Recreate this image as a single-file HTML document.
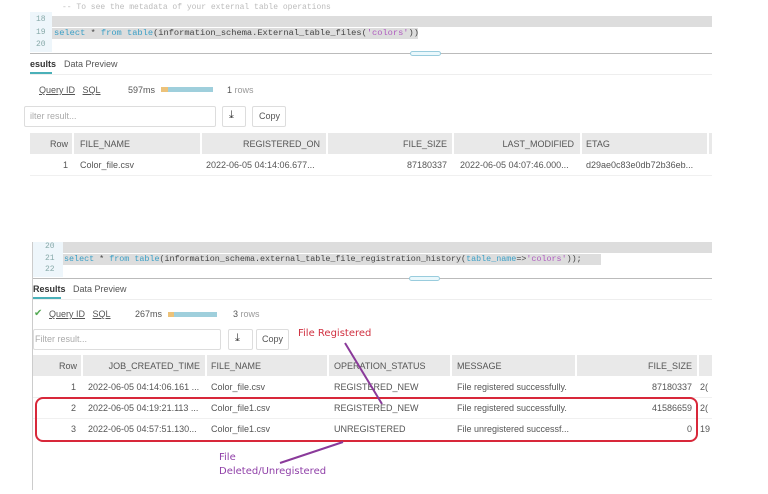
<!DOCTYPE html>
<html><head><meta charset="utf-8"><style>
*{margin:0;padding:0;box-sizing:border-box}
body{width:768px;height:494px;background:#fff;position:relative;overflow:hidden;font-family:"Liberation Sans",sans-serif;font-size:9px;color:#555}
.a{position:absolute;white-space:nowrap}
.r{position:absolute;white-space:nowrap;text-align:right}
.mono{font-family:"Liberation Mono",monospace;font-size:8.7px;color:#444}
.ln{font-family:"Liberation Mono",monospace;font-size:8px;color:#8aa}
.kw{color:#3a9fc6}.st{color:#b05cc0}
.hd{background:#e9e9e9}
.sep{position:absolute;width:2px;background:#fff}
.btn{position:absolute;border:1px solid #ddd;border-radius:2px;background:#fff}
.u{text-decoration:underline;color:#555}
</style></head><body>

<!-- TOP PANEL -->
<div class="a" style="left:30px;top:12px;width:22px;height:40px;background:#eef6fb"></div>
<div class="a mono" style="left:62px;top:3px;color:#bbb;font-size:8px">-- To see the metadata of your external table operations</div>
<div class="a" style="left:52px;top:16px;width:660px;height:11px;background:#ddd"></div>
<div class="a" style="left:52px;top:28px;width:366px;height:11px;background:#ddd"></div>
<div class="a ln" style="left:36px;top:15px">18</div>
<div class="a ln" style="left:36px;top:28px">19</div>
<div class="a ln" style="left:36px;top:40px">20</div>
<div class="a mono" style="left:54px;top:28px"><span class="kw">select</span> * <span class="kw">from table</span>(information_schema.External_table_files(<span class="st">'colors'</span>))</div>
<div class="a" style="left:30px;top:53px;width:682px;height:1px;background:#bbb"></div>
<div class="a" style="left:410px;top:51px;width:31px;height:5px;border:1px solid #9cd;border-radius:3px;background:#eaf8fc"></div>
<div class="a" style="left:30px;top:59px;font-size:9px;color:#333"><b>esults</b></div>
<div class="a" style="left:64px;top:59px;color:#555">Data Preview</div>
<div class="a" style="left:30px;top:72px;width:22px;height:2px;background:#4ab0b8"></div>
<div class="a" style="left:30px;top:74px;width:682px;height:1px;background:#eee"></div>
<div class="a" style="left:39px;top:85px"><span class="u">Query ID</span>&nbsp;&nbsp;&nbsp;<span class="u">SQL</span></div>
<div class="a" style="left:128px;top:85px">597ms</div>
<div class="a" style="left:161px;top:87px;width:52px;height:5px;background:#9fcfdc"></div>
<div class="a" style="left:161px;top:87px;width:7px;height:5px;background:#ecc27a"></div>
<div class="a" style="left:227px;top:85px">1 <span style="color:#999">rows</span></div>
<div class="btn" style="left:24px;top:106px;width:192px;height:21px"></div>
<div class="a" style="left:30px;top:111px;color:#aaa">ilter result...</div>
<div class="btn" style="left:222px;top:106px;width:24px;height:21px"></div>
<div class="a" style="left:229px;top:109px;font-size:11px;color:#333">⤓</div>
<div class="btn" style="left:252px;top:106px;width:34px;height:21px"></div>
<div class="a" style="left:259px;top:111px">Copy</div>
<div class="a hd" style="left:30px;top:133px;width:682px;height:21px"></div>
<div class="sep" style="left:72px;top:133px;height:21px"></div>
<div class="sep" style="left:200px;top:133px;height:21px"></div>
<div class="sep" style="left:326px;top:133px;height:21px"></div>
<div class="sep" style="left:452px;top:133px;height:21px"></div>
<div class="sep" style="left:580px;top:133px;height:21px"></div>
<div class="sep" style="left:707px;top:133px;height:21px"></div>
<div class="r" style="right:700px;top:139px">Row</div>
<div class="a" style="left:80px;top:139px">FILE_NAME</div>
<div class="r" style="right:448px;top:139px">REGISTERED_ON</div>
<div class="r" style="right:321px;top:139px">FILE_SIZE</div>
<div class="r" style="right:194px;top:139px">LAST_MODIFIED</div>
<div class="a" style="left:586px;top:139px">ETAG</div>
<div class="r" style="right:700px;top:160px">1</div>
<div class="a" style="left:80px;top:160px">Color_file.csv</div>
<div class="a" style="left:206px;top:160px">2022-06-05 04:14:06.677...</div>
<div class="r" style="right:321px;top:160px">87180337</div>
<div class="a" style="left:460px;top:160px">2022-06-05 04:07:46.000...</div>
<div class="a" style="left:586px;top:160px">d29ae0c83e0db72b36eb...</div>
<div class="a" style="left:30px;top:175px;width:682px;height:1px;background:#f0f0f0"></div>

<!-- BOTTOM PANEL -->
<div class="a" style="left:32px;top:242px;width:1px;height:248px;background:#ccc"></div>
<div class="a" style="left:33px;top:242px;width:30px;height:35px;background:#eef6fb"></div>
<div class="a" style="left:63px;top:242px;width:649px;height:11px;background:#ddd"></div>
<div class="a" style="left:63px;top:254px;width:538px;height:11px;background:#ddd"></div>
<div class="a ln" style="left:45px;top:242px">20</div>
<div class="a ln" style="left:45px;top:254px">21</div>
<div class="a ln" style="left:45px;top:265px">22</div>
<div class="a mono" style="left:64px;top:254px;font-size:8.4px"><span class="kw">select</span> * <span class="kw">from table</span>(information_schema.external_table_file_registration_history(<span class="kw">table_name</span>=&gt;<span class="st">'colors'</span>));</div>
<div class="a" style="left:33px;top:278px;width:679px;height:1px;background:#bbb"></div>
<div class="a" style="left:409px;top:276px;width:31px;height:5px;border:1px solid #9cd;border-radius:3px;background:#eaf8fc"></div>
<div class="a" style="left:33px;top:284px;color:#333"><b>Results</b></div>
<div class="a" style="left:73px;top:284px">Data Preview</div>
<div class="a" style="left:33px;top:297px;width:28px;height:2px;background:#4ab0b8"></div>
<div class="a" style="left:33px;top:299px;width:679px;height:1px;background:#eee"></div>
<div class="a" style="left:34px;top:308px;color:#5a5;font-size:10px">✔</div>
<div class="a" style="left:49px;top:309px"><span class="u">Query ID</span>&nbsp;&nbsp;&nbsp;<span class="u">SQL</span></div>
<div class="a" style="left:135px;top:309px">267ms</div>
<div class="a" style="left:168px;top:312px;width:49px;height:5px;background:#9fcfdc"></div>
<div class="a" style="left:168px;top:312px;width:6px;height:5px;background:#ecc27a"></div>
<div class="a" style="left:233px;top:309px">3 <span style="color:#999">rows</span></div>
<div class="btn" style="left:33px;top:329px;width:188px;height:21px"></div>
<div class="a" style="left:35px;top:334px;color:#aaa">Filter result...</div>
<div class="btn" style="left:228px;top:329px;width:25px;height:21px"></div>
<div class="a" style="left:235px;top:332px;font-size:11px;color:#333">⤓</div>
<div class="btn" style="left:256px;top:329px;width:33px;height:21px"></div>
<div class="a" style="left:262px;top:334px">Copy</div>
<div class="a" style="left:298px;top:328px;color:#d03040;font-size:10px;font-family:'DejaVu Sans',sans-serif">File Registered</div>
<div class="a hd" style="left:33px;top:355px;width:679px;height:21px"></div>
<div class="sep" style="left:81px;top:355px;height:21px"></div>
<div class="sep" style="left:205px;top:355px;height:21px"></div>
<div class="sep" style="left:327px;top:355px;height:21px"></div>
<div class="sep" style="left:450px;top:355px;height:21px"></div>
<div class="sep" style="left:575px;top:355px;height:21px"></div>
<div class="sep" style="left:697px;top:355px;height:21px"></div>
<div class="r" style="right:691px;top:361px">Row</div>
<div class="r" style="right:568px;top:361px">JOB_CREATED_TIME</div>
<div class="a" style="left:211px;top:361px">FILE_NAME</div>
<div class="a" style="left:334px;top:361px">OPERATION_STATUS</div>
<div class="a" style="left:457px;top:361px">MESSAGE</div>
<div class="r" style="right:76px;top:361px">FILE_SIZE</div>
<div class="r" style="right:692px;top:382px">1</div><div class="a" style="left:88px;top:382px">2022-06-05 04:14:06.161 ...</div><div class="a" style="left:211px;top:382px">Color_file.csv</div><div class="a" style="left:334px;top:382px">REGISTERED_NEW</div><div class="a" style="left:457px;top:382px">File registered successfully.</div><div class="r" style="right:76px;top:382px">87180337</div><div class="a" style="left:700px;top:382px">2(</div>
<div class="r" style="right:692px;top:403px">2</div><div class="a" style="left:88px;top:403px">2022-06-05 04:19:21.113 ...</div><div class="a" style="left:211px;top:403px">Color_file1.csv</div><div class="a" style="left:334px;top:403px">REGISTERED_NEW</div><div class="a" style="left:457px;top:403px">File registered successfully.</div><div class="r" style="right:76px;top:403px">41586659</div><div class="a" style="left:700px;top:403px">2(</div>
<div class="r" style="right:692px;top:424px">3</div><div class="a" style="left:88px;top:424px">2022-06-05 04:57:51.130...</div><div class="a" style="left:211px;top:424px">Color_file1.csv</div><div class="a" style="left:334px;top:424px">UNREGISTERED</div><div class="a" style="left:457px;top:424px">File unregistered successf...</div><div class="r" style="right:76px;top:424px">0</div><div class="a" style="left:700px;top:424px">19</div>
<div class="a" style="left:33px;top:397px;width:679px;height:1px;background:#f0f0f0"></div>
<div class="a" style="left:33px;top:418px;width:679px;height:1px;background:#f0f0f0"></div>
<div class="a" style="left:35px;top:397px;width:663px;height:45px;border:2px solid #d8283a;border-radius:8px"></div>
<svg class="a" style="left:0;top:0" width="768" height="494"><line x1="345" y1="343" x2="382" y2="404" stroke="#8a3a9a" stroke-width="2"/><line x1="280" y1="463" x2="343" y2="442" stroke="#8a3a9a" stroke-width="2"/></svg>
<div class="a" style="left:219px;top:452px;color:#9040a8;font-size:10px;font-family:'DejaVu Sans',sans-serif">File</div>
<div class="a" style="left:219px;top:466px;color:#9040a8;font-size:10px;font-family:'DejaVu Sans',sans-serif">Deleted/Unregistered</div>
</body></html>
